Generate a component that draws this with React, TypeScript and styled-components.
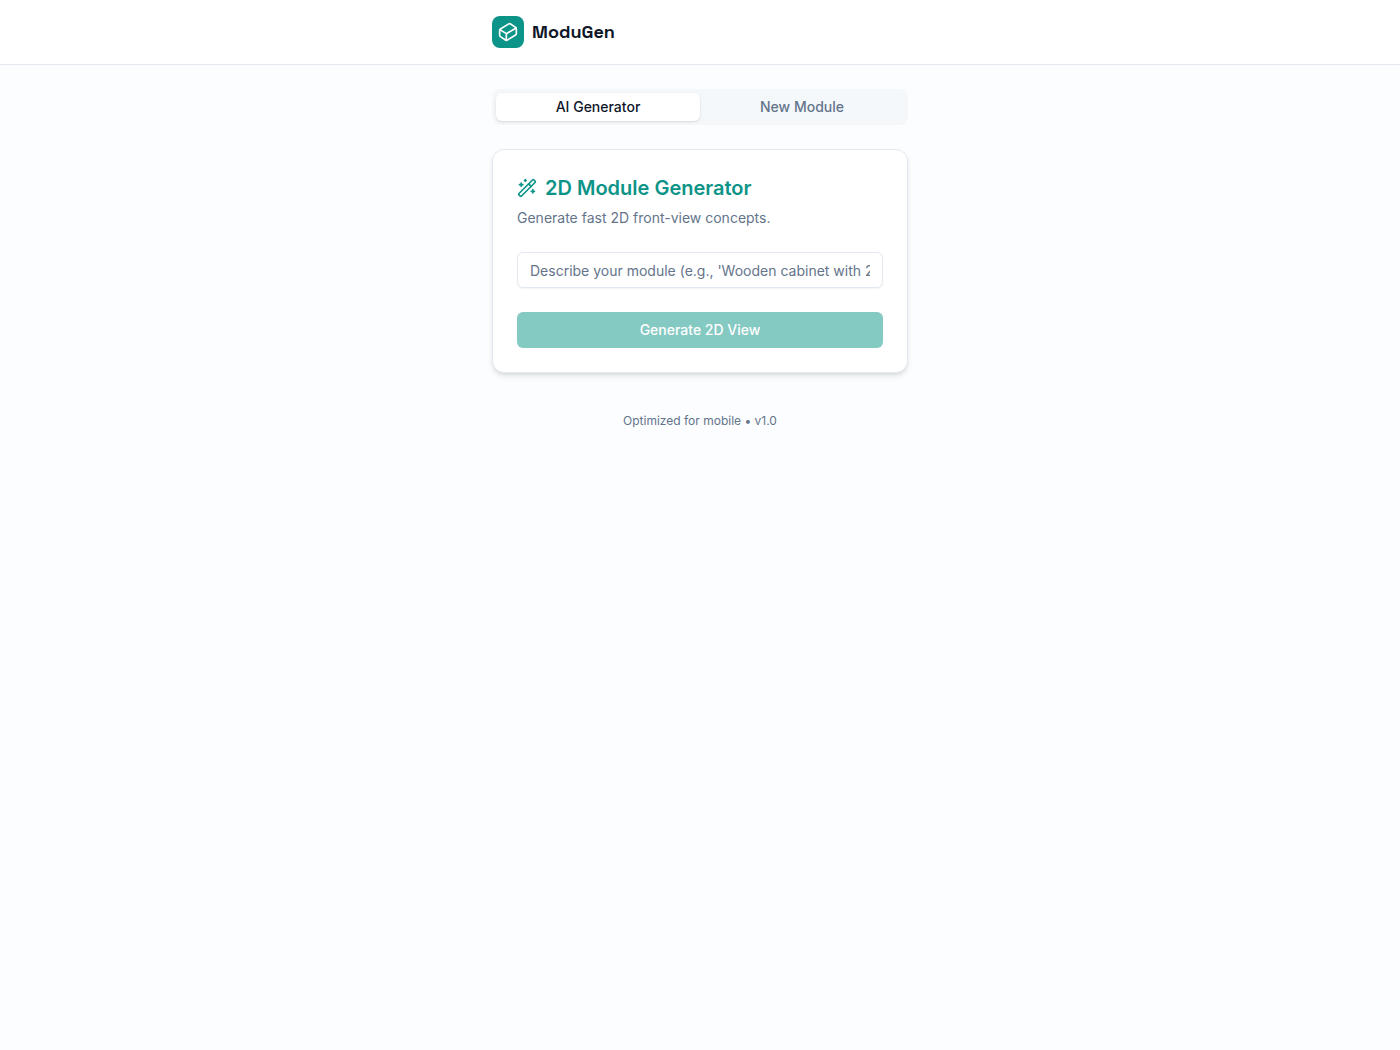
import React, { useState } from "react";
import styled, { createGlobalStyle } from "styled-components";
import { Cuboid, WandSparkles } from "lucide-react";

const GlobalStyle = createGlobalStyle`
  *, *::before, *::after { box-sizing: border-box; }
  body {
    margin: 0;
    background: #fbfdfe;
    color: #101828;
    font-family: Inter, "Liberation Sans", sans-serif;
    font-size: 14px;
    line-height: 20px;
    -webkit-font-smoothing: antialiased;
  }
  button, input { font: inherit; }
`;

const Header = styled.header`
  background: #fff;
  border-bottom: 1px solid #e2e8f0;
`;

const Container = styled.div`
  width: 100%;
  max-width: 448px;
  margin: 0 auto;
  padding: 0 16px;
`;

const Brand = styled(Container)`
  display: flex;
  align-items: center;
  gap: 8px;
  padding-top: 16px;
  padding-bottom: 16px;
`;

const Logo = styled.span`
  display: grid;
  place-items: center;
  width: 32px;
  height: 32px;
  border-radius: 8px;
  background: #0d9488;
  color: #fff;
`;

const BrandName = styled.h1`
  margin: 0;
  font-family: "Space Grotesk", Inter, sans-serif;
  font-size: 18px;
  line-height: 28px;
  font-weight: 700;
`;

const Main = styled(Container).attrs({ as: "main" })`
  padding-top: 24px;
  padding-bottom: 24px;
`;

const TabList = styled.div`
  display: grid;
  grid-template-columns: 1fr 1fr;
  padding: 4px;
  margin-bottom: 24px;
  border-radius: 8px;
  background: #f4f8fb;
`;

const Tab = styled.button<{ $active: boolean }>`
  height: 28px;
  padding: 0 12px;
  border: 0;
  border-radius: 6px;
  font-weight: 500;
  cursor: pointer;
  color: ${(p) => (p.$active ? "#0f172a" : "#64748b")};
  background: ${(p) => (p.$active ? "#fff" : "transparent")};
  box-shadow: ${(p) => (p.$active ? "0 1px 3px rgba(0, 0, 0, 0.1), 0 1px 2px -1px rgba(0, 0, 0, 0.1)" : "none")};
`;

const Card = styled.section`
  display: flex;
  flex-direction: column;
  gap: 24px;
  padding: 24px;
  border: 1px solid #e2e8f0;
  border-radius: 12px;
  background: #fff;
  box-shadow: 0 4px 6px -1px rgba(0, 0, 0, 0.1), 0 2px 4px -2px rgba(0, 0, 0, 0.1);
`;

const CardHeader = styled.div`
  display: flex;
  flex-direction: column;
  gap: 6px;
`;

const CardTitle = styled.h2`
  display: flex;
  align-items: center;
  gap: 8px;
  margin: 0;
  color: #0d9488;
  font-size: 20px;
  line-height: 28px;
  font-weight: 600;
`;

const Description = styled.p`
  margin: 0;
  color: #64748b;
`;

const Form = styled.form`
  display: flex;
  flex-direction: column;
  gap: 24px;
`;

const PromptInput = styled.input`
  width: 100%;
  height: 36px;
  padding: 4px 12px;
  border: 1px solid #e2e8f0;
  border-radius: 6px;
  background: #fff;
  color: #0f172a;
  box-shadow: 0 1px 2px rgba(0, 0, 0, 0.05);
  &::placeholder { color: #64748b; opacity: 1; }
  &:focus-visible { outline: 1px solid #0d9488; }
`;

const SubmitButton = styled.button`
  height: 36px;
  border: 0;
  border-radius: 6px;
  background: #0d9488;
  color: #fff;
  font-weight: 500;
  cursor: pointer;
  &:disabled { opacity: 0.5; cursor: default; }
`;

const Footer = styled.footer`
  padding: 16px 0;
  text-align: center;
  color: #64748b;
  font-size: 12px;
  line-height: 16px;
`;

const tabs = ["AI Generator", "New Module"];

export default function App() {
  const [active, setActive] = useState(tabs[0]);
  const [prompt, setPrompt] = useState("");

  return (
    <>
      <GlobalStyle />
      <Header>
        <Brand>
          <Logo><Cuboid size={20} /></Logo>
          <BrandName>ModuGen</BrandName>
        </Brand>
      </Header>
      <Main>
        <TabList role="tablist">
          {tabs.map((name) => (
            <Tab
              key={name}
              type="button"
              role="tab"
              aria-selected={active === name}
              $active={active === name}
              onClick={() => setActive(name)}
            >
              {name}
            </Tab>
          ))}
        </TabList>
        <Card>
          <CardHeader>
            <CardTitle><WandSparkles size={20} />2D Module Generator</CardTitle>
            <Description>Generate fast 2D front-view concepts.</Description>
          </CardHeader>
          <Form onSubmit={(e) => e.preventDefault()}>
            <PromptInput
              aria-label="Module description"
              placeholder="Describe your module (e.g., 'Wooden cabinet with 2 doors')"
              value={prompt}
              onChange={(e) => setPrompt(e.target.value)}
            />
            <SubmitButton type="submit" disabled={!prompt.trim()}>Generate 2D View</SubmitButton>
          </Form>
        </Card>
      </Main>
      <Footer>Optimized for mobile • v1.0</Footer>
    </>
  );
}
